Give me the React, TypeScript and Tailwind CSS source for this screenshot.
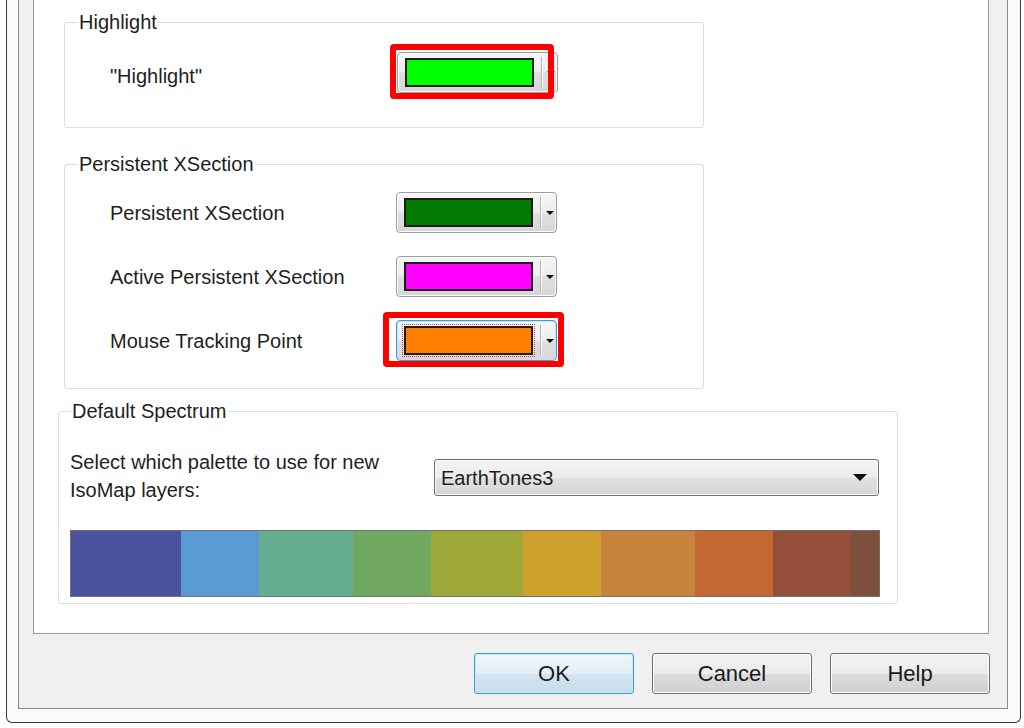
import React from 'react';

type Swatch = { label: string; color: string; marked?: boolean; focused?: boolean };

const persistent: Swatch[] = [
  { label: 'Persistent XSection', color: 'bg-[#007a00]' },
  { label: 'Active Persistent XSection', color: 'bg-[#ff00ff]' },
  { label: 'Mouse Tracking Point', color: 'bg-[#ff8000]', marked: true, focused: true },
];

// EarthTones3 stops, widths in px
const spectrum = [
  { w: 'w-[110px]', c: 'bg-[#4b52a0]' },
  { w: 'w-[78px]', c: 'bg-[#5a9bd5]' },
  { w: 'w-[94px]', c: 'bg-[#66ad92]' },
  { w: 'w-[78px]', c: 'bg-[#6fa85e]' },
  { w: 'w-[92px]', c: 'bg-[#9da838]' },
  { w: 'w-[78px]', c: 'bg-[#cea12e]' },
  { w: 'w-[94px]', c: 'bg-[#c6843c]' },
  { w: 'w-[78px]', c: 'bg-[#c36733]' },
  { w: 'w-[78px]', c: 'bg-[#944f3b]' },
  { w: 'w-[28px]', c: 'bg-[#7b503c]' },
];

function ColorCombo({ color, marked, focused, wide }: { color: string; marked?: boolean; focused?: boolean; wide?: boolean }) {
  return (
    <div
      className={`relative w-[161px] h-[41px] rounded-[4px] border flex items-center pl-[6px] bg-[linear-gradient(to_bottom,#f6f6f6_0%,#ececec_50%,#e0e0e0_50%,#d6d6d6_100%)] ${
        focused ? 'border-[#3c9cd8] shadow-[inset_0_0_0_1px_#bfe3f7]' : 'border-[#9c9c9c] shadow-[inset_0_0_0_1px_#fbfbfb]'
      }`}
    >
      <div className={`p-[1px] ${focused ? 'outline outline-1 outline-dotted outline-[#d04040]' : ''}`}>
        <div className={`w-[129px] h-[29px] border-2 border-[#1c1c1c] ${color}`} />
      </div>
      <div className="ml-[6px] w-px h-[31px] bg-[#b4b4b4] shadow-[1px_0_0_#ffffff]" />
      <div className="ml-[5px] w-0 h-0 border-x-[4px] border-x-transparent border-t-[4px] border-t-[#111]" />
      {marked && (
        <div
          className={`absolute top-[-9px] h-[55px] rounded-[4px] border-[6px] border-[#ff0000] ${
            wide ? 'left-[-14px] w-[181px]' : 'left-[-8px] w-[164px]'
          }`}
        />
      )}
    </div>
  );
}

function Button({ label, primary }: { label: string; primary?: boolean }) {
  return (
    <button
      className={`w-[160px] h-[41px] rounded-[3px] border text-[22px] text-[#1a1a1a] ${
        primary
          ? 'border-[#3c9cd8] shadow-[inset_0_0_0_1px_#c6ecfc] bg-[linear-gradient(to_bottom,#eef6fb_0%,#e3eff7_50%,#d3e5f1_50%,#c8dcea_100%)]'
          : 'border-[#707070] shadow-[inset_0_0_0_1px_#fafafa] bg-[linear-gradient(to_bottom,#f2f2f2_0%,#ebebeb_50%,#dddddd_50%,#cfcfcf_100%)]'
      }`}
    >
      {label}
    </button>
  );
}

export default function App() {
  return (
    <main className="w-[1024px] h-[728px] bg-white overflow-hidden font-['Liberation_Sans',Arial,sans-serif] text-[#1e1e1e]">
      {/* window frame */}
      <div className="ml-[6px] w-[1015px] h-[723px] border-x border-b border-[#3b3b3b] rounded-b-[6px] bg-[#f9fafb] pl-[11px] pr-[12px] pb-[13px] flex">
        {/* dialog body */}
        <div className="flex-1 border-x border-b border-[#8a8a8a] bg-[#f0f0f0] flex flex-col pl-[14px] pr-[17px] pb-[14px]">
          {/* tab page */}
          <section className="flex-1 mr-[1px] bg-white border-x border-b border-[#9a9a9a] text-[20px]">
            <fieldset className="ml-[30px] mt-[10px] w-[640px] border border-[#d5dfe5] rounded-[3px] px-[13px] pt-[18px] pb-[34px]">
              <legend className="px-[1px] leading-[24px]">Highlight</legend>
              <div className="flex items-center">
                <span className="w-[319px] pl-[32px] pt-[6px]">"Highlight"</span>
                <ColorCombo color="bg-[#00ff00]" marked />
              </div>
            </fieldset>

            <fieldset className="ml-[30px] mt-[24px] w-[640px] border border-[#d5dfe5] rounded-[3px] px-[13px] pt-[16px] pb-[27px]">
              <legend className="px-[1px] leading-[24px]">Persistent XSection</legend>
              <div className="flex flex-col gap-[23px]">
                {persistent.map((row) => (
                  <div key={row.label} className="flex items-center">
                    <span className="w-[318px] pl-[32px]">{row.label}</span>
                    <ColorCombo color={row.color} marked={row.marked} focused={row.focused} wide />
                  </div>
                ))}
              </div>
            </fieldset>

            <fieldset className="ml-[24px] mt-[10px] w-[840px] border border-[#d5dfe5] rounded-[3px] px-[11px] pt-[25px] pb-[6px]">
              <legend className="ml-[1px] px-[1px] leading-[24px]">Default Spectrum</legend>
              <div className="flex items-start">
                <p className="w-[364px] leading-[28px]">
                  Select which palette to use for new
                  <br />
                  IsoMap layers:
                </p>
                <div className="mt-[11px] w-[445px] h-[37px] rounded-[3px] border border-[#707070] shadow-[inset_0_0_0_1px_#fafafa] bg-[linear-gradient(to_bottom,#f4f4f4_0%,#ececec_50%,#e0e0e0_50%,#d8d8d8_100%)] flex items-center justify-between pl-[6px] pr-[11px]">
                  <span>EarthTones3</span>
                  <span className="w-0 h-0 border-x-[7px] border-x-transparent border-t-[7px] border-t-[#111]" />
                </div>
              </div>
              <div className="mt-[26px] w-[810px] h-[67px] border border-[#707070] flex">
                {spectrum.map((s, i) => (
                  <div key={i} className={`${s.w} ${s.c} h-full`} />
                ))}
              </div>
            </fieldset>
          </section>

          <div className="mt-[19px] flex justify-end gap-[18px]">
            <Button label="OK" primary />
            <Button label="Cancel" />
            <Button label="Help" />
          </div>
        </div>
      </div>
    </main>
  );
}
